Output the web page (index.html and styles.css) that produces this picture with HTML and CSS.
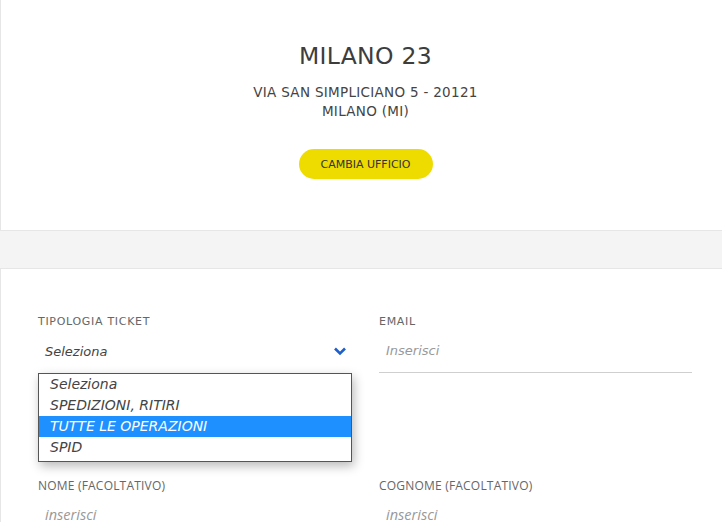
FILE: index.html
```html
<!DOCTYPE html>
<html lang="it">
<head>
  <meta charset="UTF-8" />
  <meta name="viewport" content="width=device-width, initial-scale=1.0" />
  <title>Prenota ticket - Milano 23</title>
  <link rel="stylesheet" href="styles.css">
</head>
<body>
  <div class="page">
    <div class="office">
      <h1>MILANO 23</h1>
      <p class="address">VIA SAN SIMPLICIANO 5 - 20121<br>MILANO (MI)</p>
      <button class="change-btn">CAMBIA UFFICIO</button>
    </div>

    <div class="band"></div>

    <div class="form-card">
      <div class="row">
        <div class="field">
          <label>TIPOLOGIA TICKET</label>
          <div class="select">
            <span>Seleziona</span>
            <svg class="chevron" width="14" height="10" viewBox="0 0 14 10">
              <path d="M2 2.5 L7 7.5 L12 2.5" fill="none" stroke="#1f5fc9" stroke-width="2.6" />
            </svg>
          </div>
          <ul class="dropdown">
            <li>Seleziona</li>
            <li>SPEDIZIONI, RITIRI</li>
            <li class="active">TUTTE LE OPERAZIONI</li>
            <li>SPID</li>
          </ul>
        </div>
        <div class="field">
          <label>EMAIL</label>
          <div class="input underline">Inserisci</div>
        </div>
      </div>

      <div class="row second">
        <div class="field">
          <label class="alt">NOME (FACOLTATIVO)</label>
          <div class="input alt">inserisci</div>
        </div>
        <div class="field">
          <label class="alt">COGNOME (FACOLTATIVO)</label>
          <div class="input alt">inserisci</div>
        </div>
      </div>
    </div>
  </div>
</body>
</html>
```

FILE: styles.css
```css
body {
  margin: 0;
  overflow: hidden;
  font-family: "DejaVu Sans", sans-serif;
  color: #444;
  background: #fff;
}

.page {
  width: 730px;
}

.office {
  border: 1px solid #e6e6e6;
  border-top: none;
  border-right: none;
  height: 231px;
  text-align: center;
  padding-top: 42px;
  box-sizing: border-box;
}

h1 {
  margin: 0;
  font-size: 23.5px;
  font-weight: normal;
  letter-spacing: 0.3px;
  color: #3d3d3d;
}

.address {
  margin: 13px 0 0;
  font-size: 13.5px;
  line-height: 19px;
  letter-spacing: 0.3px;
  color: #444;
}

.change-btn {
  margin-top: 28px;
  width: 134px;
  height: 30px;
  border: none;
  border-radius: 15px;
  background: #eedc00;
  color: #333;
  font-family: inherit;
  font-size: 11px;
  cursor: pointer;
}

.band {
  height: 37px;
  background: #f4f4f4;
}

.form-card {
  border-top: 1px solid #e6e6e6;
  border-left: 1px solid #e6e6e6;
  padding: 46px 38px 0 37px;
}

.row {
  display: grid;
  grid-template-columns: 314px 313px;
  column-gap: 27px;
}

.row.second {
  margin-top: 106px;
}

.field {
  position: relative;
}

label {
  display: block;
  font-size: 11px;
  line-height: 13px;
  color: #666;
  letter-spacing: 0.7px;
}

label.alt {
  font-family: "Open Sans", sans-serif;
  font-size: 12px;
  letter-spacing: 0.2px;
  color: #666;
}

.select {
  display: flex;
  justify-content: space-between;
  align-items: center;
  height: 34px;
  padding: 0 5px 0 7px;
  margin-top: 6px;
  font-size: 13px;
  font-style: italic;
  color: #444;
}

.input {
  height: 34px;
  line-height: 34px;
  padding: 0 0 4px 7px;
  margin-top: 6px;
  font-size: 13px;
  font-style: italic;
  color: #999;
}

.input.underline {
  border-bottom: 1px solid #cfcfcf;
}

.input.alt {
  font-family: "Open Sans", sans-serif;
  font-size: 14.5px;
  color: #999;
}

.dropdown {
  position: absolute;
  left: 0;
  top: 58px;
  width: 312px;
  margin: 0;
  padding: 0 0 3px;
  list-style: none;
  border: 1px solid #555;
  background: #fff;
  box-shadow: 2px 4px 10px rgba(0, 0, 0, 0.28);
  font-size: 14px;
  font-style: italic;
  color: #444;
}

.dropdown li {
  height: 21px;
  line-height: 21px;
  padding-left: 11px;
}

.dropdown li.active {
  background: #1e90ff;
  color: #fff;
}
```
